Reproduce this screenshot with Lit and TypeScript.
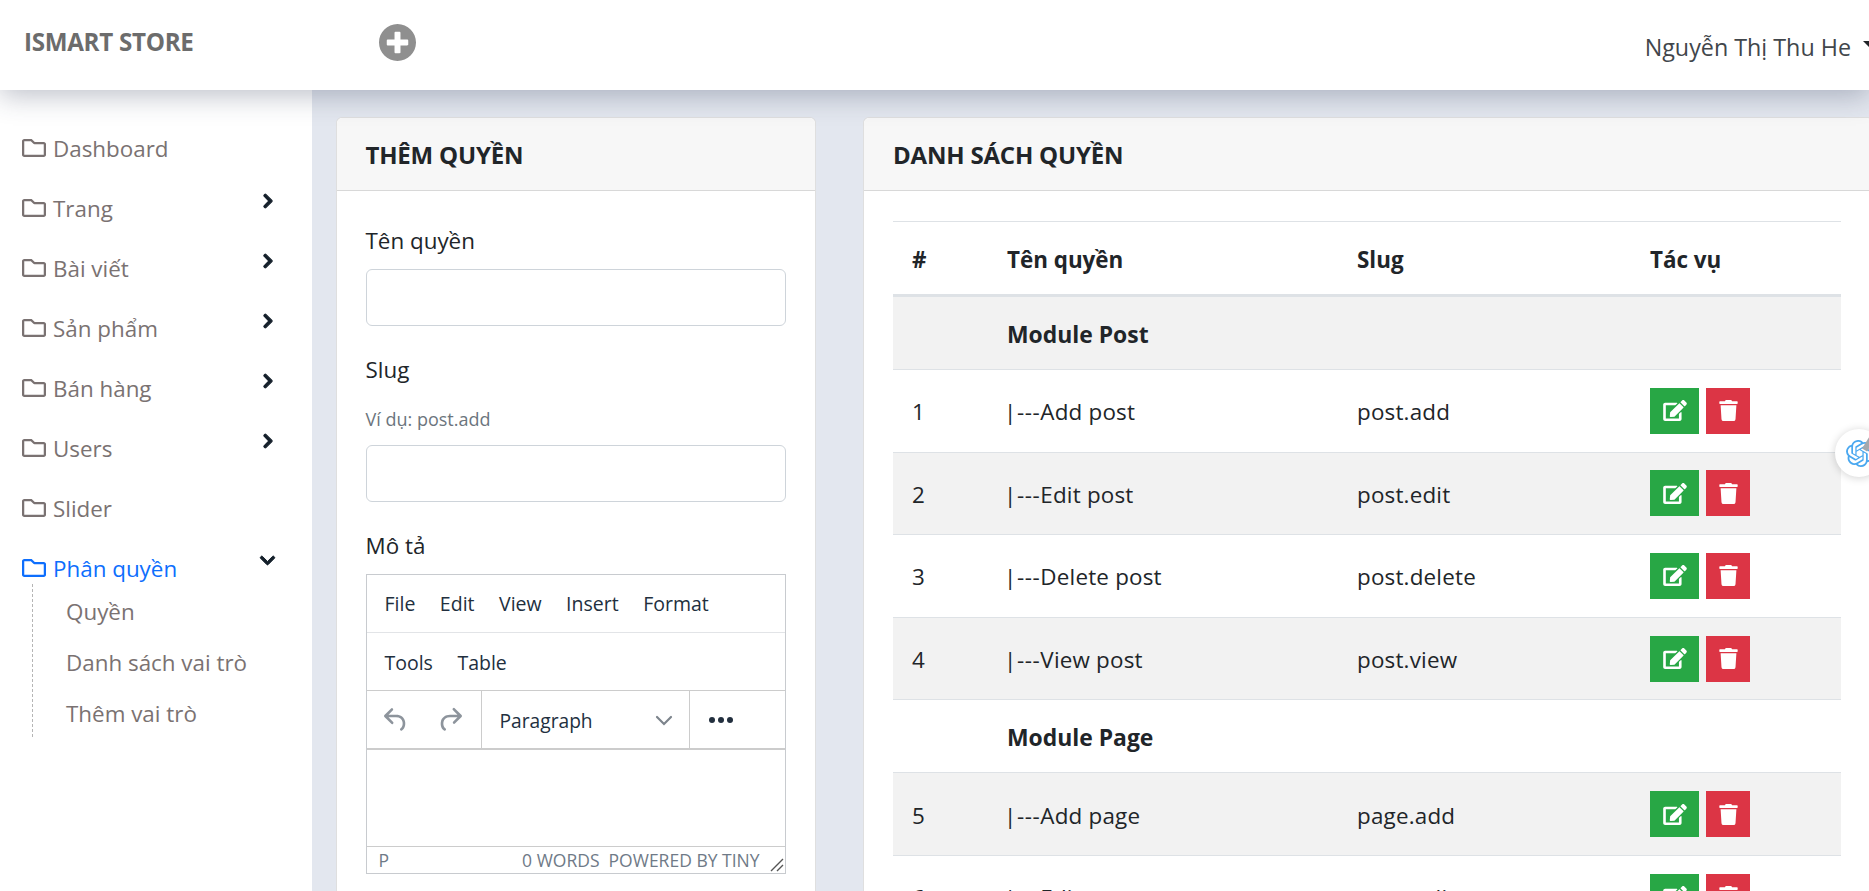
import { LitElement, html, css } from "lit";
import { customElement } from "lit/decorators.js";

const folder = html`<svg class="folder" viewBox="0 0 512 512"><path fill="currentColor" d="M464 128H272l-54.63-54.63c-6-6-14.14-9.37-22.63-9.37H48C21.49 64 0 85.49 0 112v288c0 26.51 21.49 48 48 48h416c26.51 0 48-21.49 48-48V176c0-26.51-21.49-48-48-48zm0 272H48V112h140.12l54.63 54.63c6 6 14.14 9.37 22.63 9.37H464v224z"/></svg>`;
const chevR = html`<svg class="chev-r" viewBox="0 0 320 512"><path fill="currentColor" stroke="currentColor" stroke-width="36" d="M285.476 272.971L91.132 467.314c-9.373 9.373-24.569 9.373-33.941 0l-22.667-22.667c-9.357-9.357-9.375-24.522-.04-33.901L188.505 256 34.484 101.255c-9.335-9.379-9.317-24.544.04-33.901l22.667-22.667c9.373-9.373 24.569-9.373 33.941 0L285.475 239.03c9.373 9.372 9.373 24.568.001 33.941z"/></svg>`;
const chevD = html`<svg class="chev-d" viewBox="0 0 448 512"><path fill="currentColor" stroke="currentColor" stroke-width="30" d="M207.029 381.476L12.686 187.132c-9.373-9.373-9.373-24.569 0-33.941l22.667-22.667c9.357-9.357 24.522-9.375 33.901-.04L224 284.505l154.745-154.021c9.379-9.335 24.544-9.317 33.901.04l22.667 22.667c9.373 9.373 9.373 24.569 0 33.941L240.971 381.476c-9.373 9.372-24.569 9.372-33.942 0z"/></svg>`;
const plus = html`<svg class="plus" viewBox="8 8 496 496"><path fill="currentColor" d="M256 8C119 8 8 119 8 256s111 248 248 248 248-111 248-248S393 8 256 8zm144 276c0 6.6-5.4 12-12 12h-92v92c0 6.6-5.4 12-12 12h-56c-6.6 0-12-5.4-12-12v-92h-92c-6.6 0-12-5.4-12-12v-56c0-6.6 5.4-12 12-12h92v-92c0-6.6 5.4-12 12-12h56c6.6 0 12 5.4 12 12v92h92c6.6 0 12 5.4 12 12v56z"/></svg>`;
const edit = html`<svg class="ic-edit" viewBox="0 0 576 512"><path fill="currentColor" d="M402.6 83.2l90.2 90.2c3.8 3.8 3.8 10 0 13.8L274.4 405.6l-92.8 10.3c-12.4 1.4-22.9-9.1-21.5-21.5l10.3-92.8L388.8 83.2c3.8-3.8 10-3.8 13.8 0zm162-22.9l-48.8-48.8c-15.2-15.2-39.9-15.2-55.2 0l-35.4 35.4c-3.8 3.8-3.8 10 0 13.8l90.2 90.2c3.8 3.8 10 3.8 13.8 0l35.4-35.4c15.2-15.3 15.2-40 0-55.2zM384 346.2V448H64V128h229.8c3.2 0 6.2-1.3 8.5-3.5l40-40c7.6-7.6 2.2-20.5-8.5-20.5H48C21.5 64 0 85.5 0 112v352c0 26.5 21.5 48 48 48h352c26.5 0 48-21.5 48-48V306.2c0-10.7-12.9-16-20.5-8.5l-40 40c-2.2 2.3-3.5 5.3-3.5 8.5z"/></svg>`;
const trash = html`<svg class="ic-trash" viewBox="0 0 448 512"><path fill="currentColor" d="M432 32H312l-9.4-18.7A24 24 0 0 0 281.1 0H166.8a23.72 23.72 0 0 0-21.4 13.3L136 32H16A16 16 0 0 0 0 48v32a16 16 0 0 0 16 16h416a16 16 0 0 0 16-16V48a16 16 0 0 0-16-16zM53.2 467a48 48 0 0 0 47.9 45h245.8a48 48 0 0 0 47.9-45L416 128H32z"/></svg>`;
const knot = html`<svg class="knot" viewBox="0 0 24 24"><path fill="currentColor" d="M22.2819 9.8211a5.9847 5.9847 0 0 0-.5157-4.9108 6.0462 6.0462 0 0 0-6.5098-2.9A6.0651 6.0651 0 0 0 4.9807 4.1818a5.9847 5.9847 0 0 0-3.9977 2.9 6.0462 6.0462 0 0 0 .7427 7.0966 5.98 5.98 0 0 0 .511 4.9107 6.051 6.051 0 0 0 6.5146 2.9001A5.9847 5.9847 0 0 0 13.2599 24a6.0557 6.0557 0 0 0 5.7718-4.2058 5.9894 5.9894 0 0 0 3.9977-2.9001 6.0557 6.0557 0 0 0-.7475-7.0729zm-9.022 12.6081a4.4755 4.4755 0 0 1-2.8764-1.0408l.1419-.0804 4.7783-2.7582a.7948.7948 0 0 0 .3927-.6813v-6.7369l2.02 1.1686a.071.071 0 0 1 .038.052v5.5826a4.504 4.504 0 0 1-4.4945 4.4944zm-9.6607-4.1254a4.4708 4.4708 0 0 1-.5346-3.0137l.142.0852 4.783 2.7582a.7712.7712 0 0 0 .7806 0l5.8428-3.3685v2.3324a.0804.0804 0 0 1-.0332.0615L9.74 19.9502a4.4992 4.4992 0 0 1-6.1408-1.6464zM2.3408 7.8956a4.485 4.485 0 0 1 2.3655-1.9728V11.6a.7664.7664 0 0 0 .3879.6765l5.8144 3.3543-2.0201 1.1685a.0757.0757 0 0 1-.071 0l-4.8303-2.7865A4.504 4.504 0 0 1 2.3408 7.872zm16.5963 3.8558L13.1038 8.364 15.1192 7.2a.0757.0757 0 0 1 .071 0l4.8303 2.7913a4.4944 4.4944 0 0 1-.6765 8.1042v-5.6772a.79.79 0 0 0-.407-.667zm2.0107-3.0231l-.142-.0852-4.7735-2.7818a.7759.7759 0 0 0-.7854 0L9.409 9.2297V6.8974a.0662.0662 0 0 1 .0284-.0615l4.8303-2.7866a4.4992 4.4992 0 0 1 6.6802 4.66zM8.3065 12.863l-2.02-1.1638a.0804.0804 0 0 1-.038-.0567V6.0742a4.4992 4.4992 0 0 1 7.3757-3.4537l-.142.0805L8.704 5.459a.7948.7948 0 0 0-.3927.6813zm1.0976-2.3654l2.602-1.4998 2.6069 1.4998v2.9994l-2.5974 1.4997-2.6067-1.4997Z"/></svg>`;
const undo = html`<svg class="tb-ic" viewBox="0 0 24 24"><path fill="currentColor" d="M6.4 8H12c3.7 0 6.2 2 6.8 5.1.6 2.7-.4 5.6-2.3 6.8a1 1 0 0 1-1-1.8c1.1-.6 1.8-2.7 1.4-4.6-.5-2.1-2.1-3.5-4.9-3.5H6.4l3.3 3.3a1 1 0 1 1-1.4 1.4l-5-5a1 1 0 0 1 0-1.4l5-5a1 1 0 0 1 1.4 1.4L6.4 8Z"/></svg>`;
const redo = html`<svg class="tb-ic" viewBox="0 0 24 24"><path fill="currentColor" d="M17.6 10H12c-2.8 0-4.4 1.4-4.9 3.5-.4 2 .3 4 1.4 4.6a1 1 0 1 1-1 1.8c-2-1.2-2.9-4.1-2.3-6.8.6-3 3.2-5.1 6.8-5.1h5.6l-3.3-3.3a1 1 0 1 1 1.4-1.4l5 5a1 1 0 0 1 0 1.4l-5 5a1 1 0 0 1-1.4-1.4l3.3-3.3Z"/></svg>`;

const navItems: [string, boolean][] = [
  ["Dashboard", false],
  ["Trang", true],
  ["Bài viết", true],
  ["Sản phẩm", true],
  ["Bán hàng", true],
  ["Users", true],
  ["Slider", false],
];

type Row = { module?: string; n?: number; name?: string; slug?: string };
const rows: Row[] = [
  { module: "Module Post" },
  { n: 1, name: "Add post", slug: "post.add" },
  { n: 2, name: "Edit post", slug: "post.edit" },
  { n: 3, name: "Delete post", slug: "post.delete" },
  { n: 4, name: "View post", slug: "post.view" },
  { module: "Module Page" },
  { n: 5, name: "Add page", slug: "page.add" },
  { n: 6, name: "Edit page", slug: "page.edit" },
];

@customElement("app-root")
export class AppRoot extends LitElement {
  static styles = css`
    :host {
      display: block;
      width: 1869px;
      height: 891px;
      overflow: hidden;
      position: relative;
      font-family: "Open Sans", "Noto Sans", sans-serif;
      font-size: 22.4px;
      color: #212529;
      background: #e3e7ef;
    }
    * { box-sizing: border-box; }
    .top {
      position: relative;
      z-index: 2;
      height: 90px;
      background: #fff;
      display: flex;
      align-items: center;
      padding-left: 24px;
      box-shadow: 0 6px 26px rgba(40, 50, 80, 0.3);
    }
    .logo { font-weight: 700; font-size: 24.2px; color: #6c6c6c; width: 355px; letter-spacing: -0.3px; margin-top: -7px; }
    .plus { width: 37px; height: 37px; color: #8f8f8f; display: block; margin-top: -6px; }
    .user {
      margin-left: auto;
      display: flex;
      align-items: center;
      font-size: 23.3px;
      color: #41464b;
      margin-top: 3px;
      margin-right: -8px;
    }
    .caret {
      margin-left: 12px;
      border-top: 7px solid #212529;
      border-left: 7px solid transparent;
      border-right: 7px solid transparent;
      margin-top: -4px;
    }
    .body { display: flex; height: 801px; }
    .side {
      width: 312px;
      flex: none;
      background: #fff;
      padding: 28px 0 0 22px;
      color: #7a7272;
    }
    .nav { display: flex; flex-direction: column; }
    .item { height: 60px; display: flex; align-items: center; position: relative; }
    .folder { width: 24px; height: 24px; margin-right: 7px; flex: none; }
    .chev-r { position: absolute; left: 241px; top: 15px; width: 10px; height: 16px; color: #15202b; overflow: visible; }
    .chev-d { position: absolute; left: 238px; top: 14px; width: 15px; height: 17px; color: #15202b; overflow: visible; }
    .active { color: #0d6efd; }
    .sub { margin: -14px 0 0 10px; border-left: 1px dashed #b5b5b5; padding: 2px 0 0 33px; height: 153px; }
    .sub div { height: 51px; display: flex; align-items: center; }
    .main {
      flex: 1;
      min-width: 0;
      display: flex;
      align-items: flex-start;
      gap: 47.5px;
      padding: 27px 0 0 23.5px;
    }
    .card {
      background: #fff;
      border: 1px solid rgba(0, 0, 0, 0.125);
      border-radius: 6px;
      height: 900px;
      flex: none;
    }
    .card.left { width: 480px; }
    .card.right { width: 1010px; }
    .card-h {
      height: 73px;
      background: #f7f7f7;
      border-bottom: 1px solid rgba(0, 0, 0, 0.125);
      border-radius: 6px 6px 0 0;
      display: flex;
      align-items: center;
      padding-left: 29px;
      font-weight: 700;
      font-size: 24px;
      letter-spacing: -0.2px;
    }
    .form { padding: 33px 29px 0; display: flex; flex-direction: column; }
    .label { height: 34px; line-height: 34px; margin-bottom: 11px; }
    .hint { font-size: 18px; color: #6c757d; height: 24px; line-height: 24px; margin: 9px 0 14px; }
    .input { height: 57px; border: 1px solid #ced4da; border-radius: 6px; margin-bottom: 27px; }
    .editor { height: 300px; border: 1px solid #c8cbcf; display: flex; flex-direction: column; font-size: 19.5px; color: #222f3e; }
    .menu { height: 58px; display: flex; align-items: center; gap: 24.5px; padding-left: 18px; border-bottom: 1px solid #e2e4e7; flex: none; }
    .menu.last { border-bottom: 1px solid #ccc; padding-top: 2px; }
    .tools { height: 59px; display: flex; border-bottom: 2px solid #ccc; flex: none; }
    .tg { display: flex; align-items: center; border-right: 1px solid #ccc; }
    .tg.hist { width: 115px; padding-left: 13px; gap: 22px; color: #8d949c; }
    .tb-ic { width: 32px; height: 32px; flex: none; }
    .tg.para { width: 208px; padding: 2px 16px 0 18px; justify-content: space-between; font-size: 19.2px; }
    .tb-chev { width: 18px; height: 12px; color: #7d848c; }
    .tg.more { border: none; padding-left: 18px; }
    .dots { width: 26px; height: 8px; }
    .content { flex: 1; }
    .status { height: 27px; border-top: 1px solid #ccc; display: flex; align-items: center; padding: 0 0 0 12px; font-size: 17.5px; color: #6f7a87; position: relative; flex: none; }
    .status .r { margin-left: auto; margin-right: 25px; }
    .grip { position: absolute; right: 0; bottom: 0; width: 15px; height: 15px; }
    .tbody-wrap { padding: 30px 29px 0; }
    table { width: 948px; border-collapse: separate; border-spacing: 0; table-layout: fixed; }
    col.c1 { width: 95px; }
    col.c2 { width: 350px; }
    col.c3 { width: 293px; }
    col.c4 { width: 210px; }
    th, td { padding: 2px 19px 0; text-align: left; border-bottom: 1px solid #dee2e6; font-weight: 400; }
    th { font-weight: 700; height: 76px; border-top: 1px solid #dee2e6; border-bottom: 3px solid #dee2e6; }
    td.mod { font-weight: 700; font-size: 22.9px; }
    tr.mod td { height: 73px; }
    tr.data td { height: 82.6px; letter-spacing: 0.2px; }
    tr.shade td { background: #f2f2f2; }
    .dash { letter-spacing: 0.6px; margin-left: -3px; }
    .acts { display: flex; gap: 7px; margin-top: -2px; }
    .btn { height: 46px; display: flex; align-items: center; justify-content: center; color: #fff; }
    .btn.e { width: 49px; background: #28a745; }
    .btn.d { width: 44px; background: #dc3545; }
    .ic-edit { width: 24px; height: 21px; }
    .ic-trash { width: 19px; height: 21px; }
    .bubble {
      position: absolute;
      left: 1835px;
      top: 429px;
      width: 48px;
      height: 48px;
      border-radius: 50%;
      background: #fff;
      box-shadow: 0 1px 8px rgba(0, 0, 0, 0.18);
      z-index: 3;
      display: flex;
      align-items: center;
      padding-left: 11px;
    }
    .knot { width: 27px; height: 27px; color: #4aa8f0; flex: none; }
    .pin {
      position: absolute;
      left: 30px;
      top: 9px;
      width: 6px;
      height: 13px;
      background: #a3a8ad;
      transform: rotate(32deg);
    }
  `;

  render() {
    let i = 0;
    return html`
      <header class="top">
        <div class="logo">ISMART STORE</div>
        ${plus}
        <div class="user">Nguyễn Thị Thu He<span class="caret"></span></div>
      </header>
      <div class="body">
        <aside class="side">
          <nav class="nav">
            ${navItems.map(
              ([t, c]) => html`<div class="item">${folder}<span>${t}</span>${c ? chevR : ""}</div>`
            )}
            <div class="item active">${folder}<span>Phân quyền</span>${chevD}</div>
            <div class="sub"><div>Quyền</div><div>Danh sách vai trò</div><div>Thêm vai trò</div></div>
          </nav>
        </aside>
        <main class="main">
          <section class="card left">
            <div class="card-h">THÊM QUYỀN</div>
            <div class="form">
              <div class="label">Tên quyền</div>
              <div class="input"></div>
              <div class="label">Slug</div>
              <div class="hint">Ví dụ: post.add</div>
              <div class="input"></div>
              <div class="label">Mô tả</div>
              <div class="editor">
                <div class="menu"><span>File</span><span>Edit</span><span>View</span><span>Insert</span><span>Format</span></div>
                <div class="menu last"><span>Tools</span><span>Table</span></div>
                <div class="tools">
                  <div class="tg hist">${undo}${redo}</div>
                  <div class="tg para">
                    <span>Paragraph</span>
                    <svg class="tb-chev" viewBox="0 0 18 12"><path fill="none" stroke="currentColor" stroke-width="2.2" stroke-linecap="round" d="M2 2l7 7 7-7"/></svg>
                  </div>
                  <div class="tg more">
                    <svg class="dots" viewBox="0 0 26 8"><circle cx="4" cy="4" r="3" fill="#222f3e"/><circle cx="13" cy="4" r="3" fill="#222f3e"/><circle cx="22" cy="4" r="3" fill="#222f3e"/></svg>
                  </div>
                </div>
                <div class="content"></div>
                <div class="status">
                  <span>P</span>
                  <span class="r">0 WORDS&nbsp;&nbsp;POWERED BY TINY</span>
                  <svg class="grip" viewBox="0 0 15 15"><path fill="none" stroke="#555" stroke-width="1.4" d="M1 13L13 1M7 13l6-6"/></svg>
                </div>
              </div>
            </div>
          </section>
          <section class="card right">
            <div class="card-h">DANH SÁCH QUYỀN</div>
            <div class="tbody-wrap">
              <table>
                <colgroup><col class="c1" /><col class="c2" /><col class="c3" /><col class="c4" /></colgroup>
                <thead><tr><th>#</th><th>Tên quyền</th><th>Slug</th><th>Tác vụ</th></tr></thead>
                <tbody>
                  ${rows.map((r) => {
                    const shade = i++ % 2 === 0 ? "shade" : "";
                    return r.module
                      ? html`<tr class="mod ${shade}"><td></td><td class="mod">${r.module}</td><td></td><td></td></tr>`
                      : html`<tr class="data ${shade}">
                          <td>${r.n}</td><td><span class="dash">|---</span>${r.name}</td><td>${r.slug}</td>
                          <td><div class="acts"><span class="btn e">${edit}</span><span class="btn d">${trash}</span></div></td>
                        </tr>`;
                  })}
                </tbody>
              </table>
            </div>
          </section>
        </main>
      </div>
      <div class="bubble">${knot}<span class="pin"></span></div>
    `;
  }
}
